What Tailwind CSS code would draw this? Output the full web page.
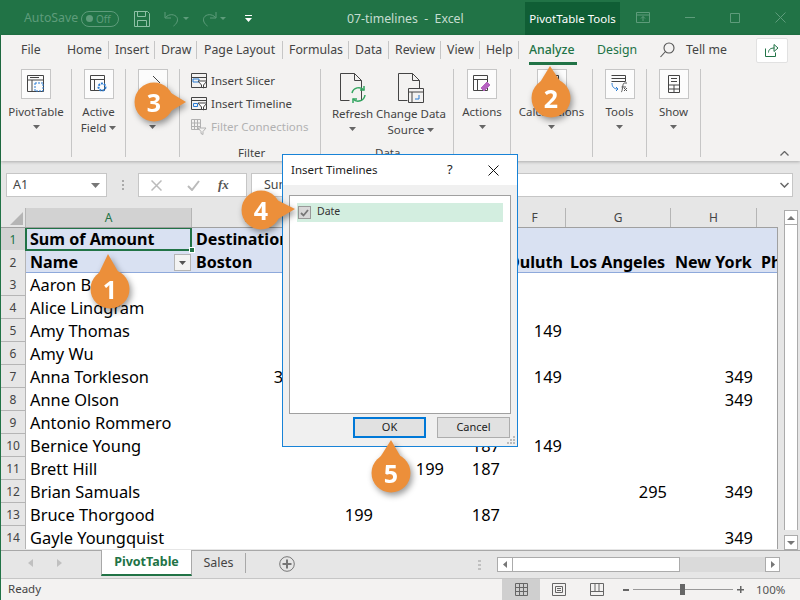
<!DOCTYPE html>
<html>
<head>
<meta charset="utf-8">
<script src="https://cdn.jsdelivr.net/npm/@tailwindcss/browser@4"></script>
</head>
<body class="m-0 bg-white">
<div class="relative w-[800px] h-[600px] overflow-hidden flex flex-col bg-[#217346] font-['Noto_Sans','Open_Sans',sans-serif] text-[12px] text-[#444]">

<!-- title bar -->
<div class="h-[35px] shrink-0 flex items-center text-[#5e9c7b] relative">
  <span class="ml-[24px] w-[57px] text-[12.3px] mt-[2px]">AutoSave</span>
  <span class="w-[38px] h-[16px] mt-[2px] rounded-full border border-[#5e9c7b] flex items-center pl-[4px] gap-[3px] text-[10px] leading-none"><span class="w-[7px] h-[7px] rounded-full bg-[#5e9c7b]"></span>Off</span>
  <svg class="ml-[15px] mt-[2px]" width="16" height="16" viewBox="0 0 16 16" fill="none" stroke="#8fc0a6"><path d="M.5.500h13l2 2v13H.5z"/><path d="M3.500.5v5h8v-5M3.500 15.500v-6h9v6"/></svg>
  <svg class="ml-[14px] mt-[2px]" width="16" height="16" viewBox="0 0 16 16" fill="none" stroke="#5e9c7b"><path d="M1 1v6h6M1.500 6.500C5 2.500 11 3 13 6.500c1.500 3-.5 6.500-3.500 8.500"/></svg>
  <svg class="ml-[3px] mt-[2px]" width="6" height="4" viewBox="0 0 6 4" fill="#5e9c7b"><path d="M0 0h6L3 3z"/></svg>
  <svg class="ml-[12px] mt-[2px]" width="16" height="16" viewBox="0 0 16 16" fill="none" stroke="#5e9c7b"><path d="M15 1v6H9M14.500 6.500C11 2.500 5 3 3 6.500c-1.500 3 .5 6.500 3.500 8.500"/></svg>
  <svg class="ml-[3px] mt-[2px]" width="6" height="4" viewBox="0 0 6 4" fill="#5e9c7b"><path d="M0 0h6L3 3z"/></svg>
  <svg class="ml-[19px] mt-[2px]" width="7" height="8" viewBox="0 0 7 8" fill="#fff"><path d="M0 0h7v1H0zM0 3h7L3.500 7z"/></svg>
  <span class="ml-[95px] w-[150px] text-[12.3px] text-[#c5ddd0] whitespace-pre mt-[3px]">07-timelines  -  Excel</span>
  <span class="ml-[28px] w-[95px] h-[33px] self-end bg-[#105e35] text-white text-[11.5px] flex items-center justify-center">PivotTable Tools</span>
  <svg class="ml-[16px]" width="14" height="11" viewBox="0 0 14 11" fill="none" stroke="#5e9c7b"><path d="M.5.500h13v10H.5zM.5 3h13M7 9V4.500M5 6.500l2-2 2 2"/></svg>
  <svg class="ml-[35px]" width="10" height="1" viewBox="0 0 10 1"><path d="M0 0h10v1H0z" fill="#5e9c7b"/></svg>
  <svg class="ml-[35px]" width="10" height="10" viewBox="0 0 10 10" fill="none" stroke="#5e9c7b"><path d="M.5.500h9v9h-9z"/></svg>
  <svg class="ml-[35px]" width="11" height="11" viewBox="0 0 11 11" fill="none" stroke="#5e9c7b"><path d="M.5.500l10 10M10.500.500l-10 10"/></svg>
</div>

<!-- tabs + ribbon -->
<div class="bg-[#f3f2f1] ml-[1px] shrink-0 shadow-[0_1px_3px_rgba(0,0,0,0.25)] z-10">
  <div class="h-[34px] pb-[4px] flex items-center text-[12.3px] text-[#444] leading-[18px]">
    <span class="w-[66px] pl-[20px]">File</span>
    <span class="w-[42px] border-r border-[#c6c6c6]">Home</span>
    <span class="w-[46px] pl-[6px] border-r border-[#c6c6c6]">Insert</span>
    <span class="w-[42px] pl-[6px] border-r border-[#c6c6c6]">Draw</span>
    <span class="w-[86px] pl-[7px] border-r border-[#c6c6c6]">Page Layout</span>
    <span class="w-[66px] pl-[6px] border-r border-[#c6c6c6]">Formulas</span>
    <span class="w-[40px] pl-[6px] border-r border-[#c6c6c6]">Data</span>
    <span class="w-[52px] pl-[6px] border-r border-[#c6c6c6]">Review</span>
    <span class="w-[39px] pl-[6px] border-r border-[#c6c6c6]">View</span>
    <span class="w-[39px] pl-[6px] border-r border-[#c6c6c6]">Help</span>
    <span class="relative ml-[10px] w-[58px] text-[#217346] font-medium">Analyze<span class="absolute left-0 w-[48px] top-[21px] h-[3px] bg-[#217346]"></span></span>
    <span class="w-[63px] ml-[10px] text-[#217346]">Design</span>
    <svg width="15" height="16" viewBox="0 0 15 16" fill="none" stroke="#555" stroke-width="1.100"><circle cx="9" cy="6" r="5"/><path d="M5.500 9.500L.5 15"/></svg>
    <span class="ml-[11px] w-[70px]">Tell me</span>
    <span class="w-[32px] h-[25px] bg-white border border-[#e1e1e1] rounded-[2px] flex items-center justify-center"><svg width="14" height="14" viewBox="0 0 14 14" fill="none" stroke="#217346"><path d="M.5 5.500v8h10v-4M3.500 9.500c0-3 2-4.500 6-4.500M9 1.500L13 5l-4 3.500z"/></svg></span>
  </div>
  <div class="h-[92px] flex relative text-[11.5px] leading-[16px] text-[#444]">
    <div class="w-[71px] h-[88px] border-r border-[#c6c6c6] flex flex-col items-center">
      <span class="w-[30px] h-[30px] border border-[#c6c6c6] bg-[#fcfcfc] flex items-center justify-center"><svg width="18" height="18" viewBox="0 0 18 18" fill="none" stroke="#444"><path d="M.5.500h16v16H.5zM.5 5h16M5 5v11.500"/><path d="M3 2.500h9" /><path d="M8 8h8v8H8z" stroke="#2b7cd3" stroke-dasharray="2 1"/></svg></span>
      <span class="mt-[5px]">PivotTable</span>
      <svg class="mt-[5px]" width="7" height="4" viewBox="0 0 7 4" fill="#666"><path d="M0 0h7L3.500 4z"/></svg>
    </div>
    <div class="w-[54px] h-[88px] border-r border-[#c6c6c6] flex flex-col items-center">
      <span class="w-[30px] h-[30px] border border-[#c6c6c6] bg-[#fcfcfc] flex items-center justify-center"><svg width="18" height="18" viewBox="0 0 18 18" fill="none" stroke="#444"><path d="M.5.500h14v15H.5zM.5 4.500h14M4.500 4.500v11"/><circle cx="12" cy="12" r="3.500" stroke="#2b7cd3" stroke-width="2" stroke-dasharray="2 1"/></svg></span>
      <span class="mt-[5px]">Active</span>
      <span class="flex items-center gap-[3px]">Field<svg width="7" height="4" viewBox="0 0 7 4" fill="#666"><path d="M0 0h7L3.500 4z"/></svg></span>
    </div>
    <div class="w-[54px] h-[88px] border-r border-[#c6c6c6] flex flex-col items-center">
      <span class="w-[30px] h-[30px] border border-[#c6c6c6] bg-[#fcfcfc] flex items-center justify-center"><svg width="18" height="18" viewBox="0 0 18 18" fill="none" stroke="#444"><path d="M9 1l7 7"/></svg></span>
      <span class="mt-[5px] h-[16px]"></span>
      <svg class="mt-[5px]" width="7" height="4" viewBox="0 0 7 4" fill="#666"><path d="M0 0h7L3.500 4z"/></svg>
    </div>
    <!-- Filter -->
    <div class="w-[141px] h-[88px] border-r border-[#c6c6c6] flex flex-col pl-[11px]">
      <div class="h-[23px] shrink-0 flex items-center gap-[4px]">
        <svg width="16" height="16" viewBox="0 0 16 16" fill="none" stroke="#444"><path d="M.5.500h15v14H.5zM.5 4.500h15" /><path d="M2 6h6v3H2z" stroke="#2b7cd3"/><path d="M7 8h9l-3.500 4v3l-2-1v-2z" fill="#fff"/></svg>Insert Slicer</div>
      <div class="h-[23px] shrink-0 flex items-center gap-[4px]">
        <svg width="16" height="16" viewBox="0 0 16 16" fill="none" stroke="#444"><path d="M.5 1.500h15v12H.5zM.5 4.500h15"/><path d="M2.500 7.500h4v3h-4z" stroke="#2b7cd3"/><path d="M7 7h9l-3.500 4v3l-2-1v-2z" fill="#fff"/></svg>Insert Timeline</div>
      <div class="h-[23px] shrink-0 flex items-center gap-[4px] text-[#b1b1b1]">
        <svg width="16" height="16" viewBox="0 0 16 16" fill="none" stroke="#b1b1b1"><path d="M.5.500h9v10h-9zM3.500.5v10M6.500.5v10M.5 4h9M.5 7.500h9"/><path d="M7 9h8l-3 3.500v3l-2-1v-2z" fill="#f3f2f1"/></svg>Filter Connections</div>
      <span class="mt-[7px] ml-[47px] w-[48px] shrink-0 text-[#444]">Filter</span>
    </div>
    <!-- Data -->
    <div class="w-[133px] h-[88px] border-r border-[#c6c6c6] relative flex pt-[4px] pl-[6px]">
      <div class="w-[51px] flex flex-col items-center">
        <svg width="28" height="30" viewBox="0 0 28 30" fill="none" stroke="#444"><path d="M1.500.5h14l7 7V28M1.500.5v27h9M15.500.5v7h7"/><path d="M13 20a7 7 0 0 1 12-3M26 22a7 7 0 0 1-12 4" stroke="#33a560" stroke-width="1.500"/><path d="M25 13v4h-4M14 30v-4h4" stroke="#33a560" stroke-width="1.500"/></svg>
        <span class="mt-[3px]">Refresh</span>
        <svg class="mt-[5px]" width="7" height="4" viewBox="0 0 7 4" fill="#666"><path d="M0 0h7L3.500 4z"/></svg>
      </div>
      <div class="w-[66px] flex flex-col items-center">
        <svg width="28" height="30" viewBox="0 0 28 30" fill="none" stroke="#444"><path d="M1.500.5h14l7 7V15M1.500.5v27h9M15.500.5v7h7"/><path d="M11.500 15.500h15v14h-15zM11.500 19h15M15 19v10.500"/><path d="M22 22v4h-4" stroke="#2b7cd3"/></svg>
        <span class="mt-[3px] whitespace-nowrap">Change Data</span>
        <span class="flex items-center gap-[3px]">Source<svg width="7" height="4" viewBox="0 0 7 4" fill="#666"><path d="M0 0h7L3.500 4z"/></svg></span>
      </div>
      <span class="absolute left-[54px] top-[76px]">Data</span>
    </div>
    <div class="w-[57px] h-[88px] border-r border-[#c6c6c6] flex flex-col items-center">
      <span class="w-[30px] h-[30px] border border-[#c6c6c6] bg-[#fcfcfc] flex items-center justify-center"><svg width="18" height="18" viewBox="0 0 18 18" fill="none" stroke="#444"><path d="M.5.500h14v15H.5zM.5 4.500h14M4.500 4.500v11"/><path d="M8 13l6-6 3 3-6 6z" fill="#b562c0" stroke="#b562c0"/></svg></span>
      <span class="mt-[5px]">Actions</span>
      <svg class="mt-[5px]" width="7" height="4" viewBox="0 0 7 4" fill="#666"><path d="M0 0h7L3.500 4z"/></svg>
    </div>
    <div class="w-[82px] h-[88px] border-r border-[#c6c6c6] flex flex-col items-center">
      <span class="w-[30px] h-[30px] border border-[#c6c6c6] bg-[#fcfcfc] flex items-center justify-center"><svg width="18" height="18" viewBox="0 0 18 18" fill="none" stroke="#444"><path d="M2.500.5h13v16h-13z"/></svg></span>
      <span class="mt-[5px]">Calculations</span>
      <svg class="mt-[5px]" width="7" height="4" viewBox="0 0 7 4" fill="#666"><path d="M0 0h7L3.500 4z"/></svg>
    </div>
    <div class="w-[54px] h-[88px] border-r border-[#c6c6c6] flex flex-col items-center">
      <span class="w-[30px] h-[30px] border border-[#c6c6c6] bg-[#fcfcfc] flex items-center justify-center"><svg width="18" height="18" viewBox="0 0 18 18" fill="none" stroke="#444"><path d="M.5.500h14v6H.5M.5 3.500h14"/><path d="M1 8c0 4 2 6 6 6M5 12l2 2-2 2" stroke="#2b7cd3"/><path d="M10 17c2 0 1-9 3.500-9H16M10.500 12H15M13 13l3 3M16 13l-3 3" stroke="#555"/></svg></span>
      <span class="mt-[5px]">Tools</span>
      <svg class="mt-[5px]" width="7" height="4" viewBox="0 0 7 4" fill="#666"><path d="M0 0h7L3.500 4z"/></svg>
    </div>
    <div class="w-[54px] h-[88px] border-r border-[#c6c6c6] flex flex-col items-center">
      <span class="w-[30px] h-[30px] border border-[#c6c6c6] bg-[#fcfcfc] flex items-center justify-center"><svg width="12" height="18" viewBox="0 0 12 18" fill="none" stroke="#444"><path d="M.5.500h11v17H.5zM.5 10h11M.5 14h11M6 10v7.500M3 3.500h6M3 6.500h6"/></svg></span>
      <span class="mt-[5px]">Show</span>
      <svg class="mt-[5px]" width="7" height="4" viewBox="0 0 7 4" fill="#666"><path d="M0 0h7L3.500 4z"/></svg>
    </div>
    <svg class="absolute left-[779px] top-[82px]" width="9" height="5" viewBox="0 0 9 5" fill="none" stroke="#666" stroke-width="1.300"><path d="M.5 4.500l4-4 4 4"/></svg>
  </div>
</div>

<!-- formula bar -->
<div class="ml-[1px] h-[47px] shrink-0 bg-[#e6e6e6] pt-[12px] pl-[5px] flex items-start">
  <div class="w-[101px] h-[24px] bg-white border border-[#c6c6c6] flex items-center justify-between pl-[6px] pr-[6px] text-[12.5px]">A1<svg width="9" height="5" viewBox="0 0 9 5" fill="#777"><path d="M0 0h9L4.500 5z"/></svg></div>
  <div class="w-[31px] h-[24px] flex flex-col items-center justify-center gap-[2px]"><i class="w-[2px] h-[2px] bg-[#aaa]"></i><i class="w-[2px] h-[2px] bg-[#aaa]"></i><i class="w-[2px] h-[2px] bg-[#aaa]"></i></div>
  <div class="w-[109px] h-[24px] bg-white border border-[#c6c6c6] flex items-center pl-[12px]">
    <svg width="11" height="11" viewBox="0 0 11 11" fill="none" stroke="#bbb" stroke-width="1.500"><path d="M.5.500l10 10M10.500.500l-10 10"/></svg>
    <svg class="ml-[25px]" width="13" height="11" viewBox="0 0 13 11" fill="none" stroke="#bbb" stroke-width="2"><path d="M1 6l4 4 7-9"/></svg>
    <span class="ml-[18px] italic font-['Liberation_Serif',serif] text-[13px] font-bold text-[#555]">fx</span>
  </div>
  <div class="ml-[4px] w-[542px] h-[24px] bg-white border border-[#c6c6c6] flex items-center justify-between pl-[12px] pr-[3px] text-[12.5px]">Sum of Amount<svg width="9" height="6" viewBox="0 0 9 6" fill="none" stroke="#666" stroke-width="1.500"><path d="M.5 1l4 4 4-4"/></svg></div>
</div>

<!-- sheet -->
<div class="ml-[1px] h-[342px] shrink-0 bg-[#e6e6e6] flex relative">
  <div class="w-[777px] text-[16.4px] leading-[23px] text-black overflow-hidden font-['Noto_Sans',sans-serif]">
    <div class="h-[19px] w-[776px] grid grid-cols-[25px_166px_114px_71px_71px_56px_62px_105px_86px_20px] text-center text-[12px] leading-[19px] text-[#444]">
      <span class="relative border-r border-[#b5b5b5]"><svg class="absolute right-[2px] bottom-[2px]" width="13" height="13" viewBox="0 0 13 13"><path d="M13 0v13H0z" fill="#b5b5b5"/></svg></span>
      <span class="bg-[#d2d2d2] text-[#217346] border-r border-[#b5b5b5]">A</span><span class="border-r border-[#b5b5b5]">B</span><span class="border-r border-[#b5b5b5]">C</span><span class="border-r border-[#b5b5b5]">D</span><span class="border-r border-[#b5b5b5]">E</span><span class="border-r border-[#b5b5b5]">F</span><span class="border-r border-[#b5b5b5]">G</span><span class="border-r border-[#b5b5b5]">H</span><span></span>
    </div>
    <!-- rows -->
    <div class="bg-white border-t border-r border-[#a0a0a0] w-[777px] overflow-hidden">
      <div class="h-[23px] grid grid-cols-[25px_166px_114px_71px_71px_56px_62px_105px_86px_20px] bg-[#d9e1f2] font-bold text-[16.1px] leading-[25px] whitespace-nowrap -mt-[1px]">
        <span class="bg-[#d2d2d2] text-[#217346] text-[12px] font-normal text-center border-b border-r border-[#b5b5b5]">1</span>
        <span class="relative pl-[4px]">Sum of Amount<i class="absolute -left-[1px] top-0 w-[167px] h-[24px] border-2 border-[#217346]"></i><i class="absolute right-[-3px] top-[20px] w-[6px] h-[6px] bg-[#217346] border border-white"></i></span>
        <span class="pl-[4px]">Destination</span><span></span><span></span><span></span><span></span><span></span><span></span><span></span>
      </div>
      <div class="h-[23px] grid grid-cols-[25px_166px_114px_71px_71px_56px_62px_105px_86px_20px] bg-[#d9e1f2] font-bold text-[16.1px] leading-[25px] whitespace-nowrap border-b border-[#8ea9db]">
        <span class="bg-[#e6e6e6] text-[#444] text-[12px] font-normal text-center border-b border-r border-[#b5b5b5]">2</span>
        <span class="relative pl-[4px]">Name<span class="absolute right-[1px] top-[4px] w-[17px] h-[17px] bg-[#f3f3f3] border border-[#b5b5b5] flex items-center justify-center"><svg width="7" height="4" viewBox="0 0 7 4" fill="#555"><path d="M0 0h7L3.500 4z"/></svg></span></span>
        <span class="pl-[4px]">Boston</span><span></span><span></span><span></span><span class="pl-[4px]">Duluth</span><span class="pl-[4px]">Los Angeles</span><span class="pl-[4px]">New York</span><span class="pl-[4px] overflow-hidden">Philadelphia</span>
      </div>
      <div class="grid grid-cols-[25px_166px_114px_71px_71px_56px_62px_105px_86px_20px] auto-rows-[23px] whitespace-nowrap [&>b]:font-normal [&>b]:text-right [&>b]:pr-[4px]">
        <span class="bg-[#e6e6e6] text-[#444] text-[12px] text-center border-b border-r border-[#b5b5b5]">3</span><span class="pl-[4px]">Aaron Bell</span><b></b><b></b><b></b><b></b><b></b><b></b><b></b><b></b>
        <span class="bg-[#e6e6e6] text-[#444] text-[12px] text-center border-b border-r border-[#b5b5b5]">4</span><span class="pl-[4px]">Alice Lindgram</span><b></b><b></b><b></b><b></b><b></b><b></b><b></b><b></b>
        <span class="bg-[#e6e6e6] text-[#444] text-[12px] text-center border-b border-r border-[#b5b5b5]">5</span><span class="pl-[4px]">Amy Thomas</span><b></b><b></b><b></b><b></b><b>149</b><b></b><b></b><b></b>
        <span class="bg-[#e6e6e6] text-[#444] text-[12px] text-center border-b border-r border-[#b5b5b5]">6</span><span class="pl-[4px]">Amy Wu</span><b></b><b></b><b></b><b></b><b></b><b></b><b></b><b></b>
        <span class="bg-[#e6e6e6] text-[#444] text-[12px] text-center border-b border-r border-[#b5b5b5]">7</span><span class="pl-[4px]">Anna Torkleson</span><b>349</b><b></b><b></b><b></b><b>149</b><b></b><b>349</b><b></b>
        <span class="bg-[#e6e6e6] text-[#444] text-[12px] text-center border-b border-r border-[#b5b5b5]">8</span><span class="pl-[4px]">Anne Olson</span><b></b><b></b><b></b><b></b><b></b><b></b><b>349</b><b></b>
        <span class="bg-[#e6e6e6] text-[#444] text-[12px] text-center border-b border-r border-[#b5b5b5]">9</span><span class="pl-[4px]">Antonio Rommero</span><b></b><b></b><b></b><b></b><b></b><b></b><b></b><b></b>
        <span class="bg-[#e6e6e6] text-[#444] text-[12px] text-center border-b border-r border-[#b5b5b5]">10</span><span class="pl-[4px]">Bernice Young</span><b></b><b></b><b></b><b>187</b><b>149</b><b></b><b></b><b></b>
        <span class="bg-[#e6e6e6] text-[#444] text-[12px] text-center border-b border-r border-[#b5b5b5]">11</span><span class="pl-[4px]">Brett Hill</span><b></b><b></b><b>199</b><b>187</b><b></b><b></b><b></b><b></b>
        <span class="bg-[#e6e6e6] text-[#444] text-[12px] text-center border-b border-r border-[#b5b5b5]">12</span><span class="pl-[4px]">Brian Samuals</span><b></b><b></b><b></b><b></b><b></b><b>295</b><b>349</b><b></b>
        <span class="bg-[#e6e6e6] text-[#444] text-[12px] text-center border-b border-r border-[#b5b5b5]">13</span><span class="pl-[4px]">Bruce Thorgood</span><b></b><b>199</b><b></b><b>187</b><b></b><b></b><b></b><b></b>
        <span class="bg-[#e6e6e6] text-[#444] text-[12px] text-center border-r border-[#b5b5b5]">14</span><span class="pl-[4px]">Gayle Youngquist</span><b></b><b></b><b></b><b></b><b></b><b></b><b>349</b><b></b>
      </div>
    </div>
  </div>
  <!-- vertical scrollbar -->
  <div class="w-[22px] flex flex-col items-center pl-[4px] pt-[2px]">
    <span class="w-[14px] h-[15px] bg-white border border-[#ababab] flex items-center justify-center"><svg width="8" height="4" viewBox="0 0 8 4" fill="#777"><path d="M0 4h8L4 0z"/></svg></span>
    <span class="w-[14px] h-[305px] bg-white border-x border-[#ababab]"></span>
    <span class="w-[14px] h-[5px]"></span>
    <span class="w-[14px] h-[15px] bg-white border border-[#ababab] flex items-center justify-center"><svg width="8" height="4" viewBox="0 0 8 4" fill="#777"><path d="M0 0h8L4 4z"/></svg></span>
  </div>
</div>

<!-- sheet tabs -->
<div class="ml-[1px] h-[28px] shrink-0 bg-[#e6e6e6] border-t border-[#a8a8a8] flex relative">
  <svg class="ml-[27px] mt-[8px]" width="5" height="8" viewBox="0 0 5 8" fill="#c0c0c0"><path d="M5 0v8L0 4z"/></svg>
  <svg class="ml-[24px] mt-[8px]" width="5" height="8" viewBox="0 0 5 8" fill="#c0c0c0"><path d="M0 0v8l5-4z"/></svg>
  <span class="ml-[39px] -mt-[1px] w-[91px] h-[26px] bg-white border-x border-b-2 border-[#a8a8a8] border-b-[#217346] text-[#217346] font-bold text-[12.5px] flex items-center justify-center">PivotTable</span>
  <span class="w-[54px] h-[20px] mt-[2px] border-r border-[#a8a8a8] text-[12.5px] flex items-center justify-center">Sales</span>
  <svg class="ml-[33px] mt-[5px]" width="16" height="16" viewBox="0 0 16 16" fill="none" stroke="#777"><circle cx="8" cy="8" r="7.300"/><path d="M3.500 8h9M8 3.500v9" stroke-width="2"/></svg>
  <div class="absolute left-[477px] top-[9px] flex flex-col gap-[2px]"><i class="w-[3px] h-[2px] bg-[#c0c0c0]"></i><i class="w-[3px] h-[2px] bg-[#c0c0c0]"></i><i class="w-[3px] h-[2px] bg-[#c0c0c0]"></i></div>
  <div class="absolute left-[496px] top-[6px] flex h-[15px] w-[283px] bg-[#dadada]">
    <span class="w-[16px] bg-white border border-[#ababab] flex items-center justify-center"><svg width="4" height="7" viewBox="0 0 4 7" fill="#777"><path d="M4 0v7L0 3.500z"/></svg></span>
    <span class="w-[167px] bg-white border-y border-r border-[#ababab]"></span>
    <span class="w-[85px]"></span>
    <span class="w-[15px] bg-white border border-[#ababab] flex items-center justify-center"><svg width="4" height="7" viewBox="0 0 4 7" fill="#777"><path d="M0 0v7l4-3.500z"/></svg></span>
  </div>
</div>

<!-- status bar -->
<div class="ml-[1px] h-[22px] shrink-0 bg-[#f3f2f1] border-t border-[#c6c6c6] flex items-center text-[11.5px] mb-[1px]">
  <span class="ml-[7px] w-[494px] -mt-[1px]">Ready</span>
  <span class="w-[38px] h-full bg-[#cfcfcf] flex items-center justify-center"><svg width="13" height="13" viewBox="0 0 13 13" fill="none" stroke="#666"><path d="M.5.500h12v12H.5zM4.500.5v12M8.500.5v12M.5 4.500h12M.5 8.500h12"/></svg></span>
  <span class="w-[38px] flex justify-center"><svg width="14" height="13" viewBox="0 0 14 13" fill="none" stroke="#666"><path d="M.5.500h13v12H.5zM3.500 3.500h7v6h-7zM5 5.500h4M5 7.500h4"/></svg></span>
  <span class="w-[38px] flex justify-center"><svg width="14" height="13" viewBox="0 0 14 13" fill="none" stroke="#666"><path d="M.5.500h13v12H.5zM.5 8.500h13M5 .5v8M9 .5v8"/></svg></span>
  <span class="ml-[7px] w-[6px] h-[2px] bg-[#666]"></span>
  <span class="ml-[4px] relative w-[100px] h-[1px] bg-[#999]"><i class="absolute left-[47px] -top-[5px] w-[5px] h-[11px] bg-[#666]"></i></span>
  <svg class="ml-[4px]" width="7" height="7" viewBox="0 0 7 7" fill="#666"><path d="M3 0h1.500v3H7v1.500H4.500V7H3V4.500H0V3h3z"/></svg>
  <span class="ml-[12px] text-[#555]">100%</span>
</div>

<!-- dialog -->
<div class="absolute z-20 left-[282px] top-[154px] w-[236px] h-[293px] border border-[#1883d7] bg-[#f0f0f0] flex flex-col text-[#222]">
  <div class="h-[30px] bg-white flex items-center pl-[8px] text-[11.5px] text-[#222]">
    <span class="w-[156px]">Insert Timelines</span>
    <span class="w-[20px] text-[13px]">?</span>
    <svg class="ml-[21px]" width="11" height="11" viewBox="0 0 11 11" fill="none" stroke="#111"><path d="M.5.500l10 10M10.500.500l-10 10"/></svg>
  </div>
  <div class="mx-[6px] mt-[10px] h-[219px] border border-[#a0a0a0] bg-white p-[7px]">
    <div class="h-[19px] bg-[#d3eee0] flex items-center pl-[1px] gap-[6px] text-[10.5px] leading-none text-[#333]">
      <span class="w-[13px] h-[13px] border border-[#999] bg-[#d8d8d8] flex items-center justify-center"><svg width="9" height="8" viewBox="0 0 9 8" fill="none" stroke="#777" stroke-width="1.800"><path d="M1 4l2.500 2.500L8 1"/></svg></span><span class="-mt-[3px]">Date</span>
    </div>
  </div>
  <div class="mt-[3px] flex pl-[70px] gap-[11px] text-[11px]">
    <span class="w-[73px] h-[21px] bg-[#e1e1e1] border-2 border-[#0078d7] flex items-center justify-center">OK</span>
    <span class="w-[73px] h-[21px] bg-[#e1e1e1] border border-[#adadad] flex items-center justify-center">Cancel</span>
  </div>
  <svg class="absolute right-[1px] bottom-[1px]" width="9" height="9" viewBox="0 0 9 9" fill="#bbb"><path d="M6 0h2v2H6zM3 3h2v2H3zM6 3h2v2H6zM0 6h2v2H0zM3 6h2v2H3zM6 6h2v2H6z"/></svg>
</div>

<!-- callouts -->
<div class="absolute z-30 left-[90px] top-[269px] w-[40px] h-[40px] drop-shadow-[2px_3px_3px_rgba(0,0,0,0.4)]"><svg class="absolute inset-0 overflow-visible" width="40" height="40"><circle cx="20" cy="20" r="19.500" fill="#ec8f3a"/><polygon points="18,-15 8,6 30,6" fill="#ec8f3a"/></svg><span class="absolute inset-0 flex items-center justify-center text-white font-bold text-[25px] leading-none">1</span></div>
<div class="absolute z-30 left-[531px] top-[78px] w-[40px] h-[40px] drop-shadow-[2px_3px_3px_rgba(0,0,0,0.4)]"><svg class="absolute inset-0 overflow-visible" width="40" height="40"><circle cx="20" cy="20" r="19.500" fill="#ec8f3a"/><polygon points="19,-12 8,6 31,6" fill="#ec8f3a"/></svg><span class="absolute inset-0 flex items-center justify-center text-white font-bold text-[25px] leading-none">2</span></div>
<div class="absolute z-30 left-[134px] top-[82px] w-[40px] h-[40px] drop-shadow-[2px_3px_3px_rgba(0,0,0,0.4)]"><svg class="absolute inset-0 overflow-visible" width="40" height="40"><circle cx="20" cy="20" r="19.500" fill="#ec8f3a"/><polygon points="52,20 32,8 32,32" fill="#ec8f3a"/></svg><span class="absolute inset-0 flex items-center justify-center text-white font-bold text-[25px] leading-none">3</span></div>
<div class="absolute z-30 left-[241px] top-[190px] w-[40px] h-[40px] drop-shadow-[2px_3px_3px_rgba(0,0,0,0.4)]"><svg class="absolute inset-0 overflow-visible" width="40" height="40"><circle cx="20" cy="20" r="19.500" fill="#ec8f3a"/><polygon points="54,19 32,8 32,32" fill="#ec8f3a"/></svg><span class="absolute inset-0 flex items-center justify-center text-white font-bold text-[25px] leading-none">4</span></div>
<div class="absolute z-30 left-[371px] top-[453px] w-[40px] h-[40px] drop-shadow-[2px_3px_3px_rgba(0,0,0,0.4)]"><svg class="absolute inset-0 overflow-visible" width="40" height="40"><circle cx="20" cy="20" r="19.500" fill="#ec8f3a"/><polygon points="20,-13 8,6 31,6" fill="#ec8f3a"/></svg><span class="absolute inset-0 flex items-center justify-center text-white font-bold text-[25px] leading-none">5</span></div>

</div>
</body>
</html>
